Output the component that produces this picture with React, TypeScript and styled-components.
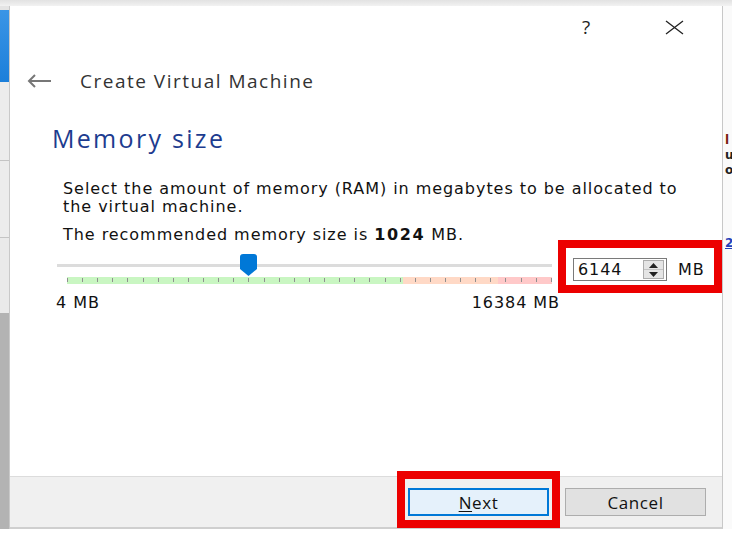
import React from "react";
import styled, { createGlobalStyle } from "styled-components";

const GlobalStyle = createGlobalStyle`
  html, body {
    margin: 0;
    padding: 0;
    background: #ffffff;
  }
  body {
    font-family: "DejaVu Sans", Verdana, sans-serif;
  }
`;

const Page = styled.div`
  width: 732px;
  height: 534px;
  overflow: hidden;
  display: flex;
  flex-direction: column;
  background: #ffffff;
`;

const TopShade = styled.div`
  height: 6px;
  flex-shrink: 0;
  background: linear-gradient(#e2e2e2, #f2f2f2);
`;

const Desk = styled.div`
  display: flex;
  height: 523px;
`;

const LeftStrip = styled.div`
  width: 9px;
  flex-shrink: 0;
  display: flex;
  flex-direction: column;
  border-right: 1px solid #c9c9c9;
`;

const StripPart = styled.div<{ $h: number; $bg: string; $line?: boolean }>`
  height: ${(p) => p.$h}px;
  flex-shrink: 0;
  background: ${(p) => p.$bg};
  border-bottom: ${(p) => (p.$line ? "1px solid #c4c4c4" : "none")};
`;

const StripRest = styled.div`
  flex: 1;
  background: #b3b3b3;
`;

const Dialog = styled.div`
  width: 713px;
  flex-shrink: 0;
  display: flex;
  flex-direction: column;
  background: #ffffff;
  border-right: 1px solid #c8c8c8;
  border-bottom: 2px solid #cfcfcf;
  box-sizing: border-box;
`;

const RightStrip = styled.div`
  flex: 1;
  overflow: hidden;
  background: #fafafa;
  padding: 127px 0 0 2px;
  font-family: "DejaVu Sans", sans-serif;
  font-size: 12px;
  font-weight: bold;
  line-height: 15px;
`;

const Fragment = styled.div<{ $color: string; $mt?: number }>`
  color: ${(p) => p.$color};
  margin-top: ${(p) => p.$mt ?? 0}px;
`;

const TitleBar = styled.div`
  height: 42px;
  display: flex;
  justify-content: flex-end;
  padding-right: 3px;
  flex-shrink: 0;
`;

const CaptionButton = styled.div<{ $shift?: number }>`
  width: 90px;
  display: flex;
  align-items: center;
  justify-content: center;
  font-family: "Open Sans", sans-serif;
  font-size: 19px;
  color: #1f1f1f;
  padding-left: ${(p) => p.$shift ?? 0}px;
  box-sizing: border-box;
`;

const Header = styled.div`
  height: 66px;
  display: flex;
  align-items: center;
  padding-left: 17px;
  gap: 28px;
  flex-shrink: 0;
`;

const HeaderTitle = styled.div`
  font-family: "Open Sans", sans-serif;
  font-size: 19px;
  color: #333333;
  letter-spacing: 1.5px;
`;

const Body = styled.div`
  flex: 1;
  padding-left: 42px;
  display: flex;
  flex-direction: column;
`;

const Heading = styled.div`
  font-family: "Open Sans", sans-serif;
  font-size: 25px;
  line-height: 30px;
  letter-spacing: 2.3px;
  color: #1d3c8f;
  margin-top: 9px;
`;

const Text = styled.p<{ $mt: number }>`
  margin: ${(p) => p.$mt}px 0 0 11px;
  font-size: 16px;
  letter-spacing: 0.95px;
  line-height: 18px;
  color: #111111;
  width: 650px;

  b {
    letter-spacing: 1.6px;
  }
`;

const SliderRow = styled.div`
  display: flex;
  align-items: flex-start;
`;

const SliderColumn = styled.div`
  width: 495px;
  padding-top: 10px;
  margin-left: 5px;
  flex-shrink: 0;
`;

const TrackArea = styled.div`
  position: relative;
  height: 22px;
  padding-top: 10px;
  box-sizing: border-box;
`;

const TrackLine = styled.div`
  height: 3px;
  background: #dcdcdc;
`;

const Handle = styled.svg`
  position: absolute;
  top: 0;
  width: 17px;
  height: 22px;
`;

const TickBar = styled.div`
  margin: 1px 0 0 10px;
  height: 7px;
  display: flex;
  position: relative;
`;

const Zone = styled.div<{ $w: number; $bg: string }>`
  width: ${(p) => p.$w}px;
  background: ${(p) => p.$bg};
`;

const Ticks = styled.div`
  position: absolute;
  left: 0;
  right: 0;
  top: 1px;
  height: 4px;
  background: repeating-linear-gradient(
    to right,
    #8f8f8f 0,
    #8f8f8f 1px,
    transparent 1px,
    transparent 15.12px
  );
`;

const Labels = styled.div`
  display: flex;
  justify-content: space-between;
  margin: 10px -8px 0 -1px;
  font-size: 16px;
  letter-spacing: 0.95px;
  line-height: 18px;
  color: #111111;
`;

const Highlight = styled.div<{ $pad: string; $mt?: number; $ml?: number }>`
  border: 8px solid #ec0000;
  padding: ${(p) => p.$pad};
  margin-top: ${(p) => p.$mt ?? 0}px;
  margin-left: ${(p) => p.$ml ?? 0}px;
  display: flex;
  align-items: center;
  flex-shrink: 0;
`;

const SpinBox = styled.div`
  width: 94px;
  height: 23px;
  box-sizing: border-box;
  border: 1px solid #7a7a7a;
  display: flex;
  align-items: center;
  justify-content: space-between;
  padding: 0 2px 0 4px;
  background: #ffffff;
`;

const SpinValue = styled.span`
  font-size: 16px;
  letter-spacing: 0.9px;
  color: #111111;
`;

const SpinButtons = styled.div`
  width: 21px;
  height: 19px;
  display: flex;
  flex-direction: column;
  border: 1px solid #adadad;
  box-sizing: border-box;
  background: #e5e5e5;
`;

const SpinHalf = styled.div<{ $top?: boolean }>`
  flex: 1;
  display: flex;
  align-items: center;
  justify-content: center;
  border-bottom: ${(p) => (p.$top ? "1px solid #c4c4c4" : "none")};
`;

const Unit = styled.span`
  margin-left: 11px;
  font-size: 16px;
  letter-spacing: 0.9px;
  color: #111111;
`;

const Footer = styled.div`
  height: 50px;
  flex-shrink: 0;
  border-top: 1px solid #dcdcdc;
  background: #f0f0f0;
  display: flex;
  justify-content: flex-end;
  align-items: flex-start;
  gap: 5px;
  padding-right: 16px;
`;

const Button = styled.button<{ $primary?: boolean }>`
  width: 141px;
  height: 28px;
  margin-top: ${(p) => (p.$primary ? 0 : 11)}px;
  font-family: "Open Sans", sans-serif;
  font-size: 17px;
  letter-spacing: 0.6px;
  color: #111111;
  background: ${(p) => (p.$primary ? "#e5f1fb" : "#e1e1e1")};
  border: ${(p) => (p.$primary ? "2px solid #0078d7" : "1px solid #adadad")};
  padding: 0;
  u {
    text-underline-offset: 2px;
  }
`;

export default function App() {
  const handleLeft = 183;
  return (
    <Page>
      <GlobalStyle />
      <TopShade />
      <Desk>
        <LeftStrip>
          <StripPart $h={4} $bg="#e4e4e4" />
          <StripPart $h={72} $bg="linear-gradient(#3b95e6, #1c7fda)" />
          <StripPart $h={78} $bg="#ececec" $line />
          <StripPart $h={76} $bg="#ececec" $line />
          <StripPart $h={75} $bg="#eaeaea" />
          <StripRest />
        </LeftStrip>
        <Dialog>
          <TitleBar>
            <CaptionButton $shift={4}>?</CaptionButton>
            <CaptionButton>
              <svg width="19" height="15" viewBox="0 0 19 15">
                <path d="M1 1 L18 14 M18 1 L1 14" stroke="#222" strokeWidth="1.3" fill="none" />
              </svg>
            </CaptionButton>
          </TitleBar>
          <Header>
            <svg width="25" height="14" viewBox="0 0 25 14">
              <path d="M24 7 H2 M8 1 L2 7 L8 13" stroke="#777" strokeWidth="2" fill="none" />
            </svg>
            <HeaderTitle>Create Virtual Machine</HeaderTitle>
          </Header>
          <Body>
            <Heading>Memory size</Heading>
            <Text $mt={27}>
              Select the amount of memory (RAM) in megabytes to be allocated to
              <br />
              the virtual machine.
            </Text>
            <Text $mt={10}>
              The recommended memory size is <b>1024</b> MB.
            </Text>
            <SliderRow>
              <SliderColumn>
                <TrackArea>
                  <TrackLine />
                  <Handle viewBox="0 0 17 22" style={{ left: handleLeft }}>
                    <path d="M0 3 Q0 0 3 0 H14 Q17 0 17 3 V15 L8.5 22 L0 15 Z" fill="#0078d7" />
                  </Handle>
                </TrackArea>
                <TickBar>
                  <Zone $w={336} $bg="#c9f6c2" />
                  <Zone $w={95} $bg="#ffd9c6" />
                  <Zone $w={54} $bg="#ffc9c9" />
                  <Ticks />
                </TickBar>
                <Labels>
                  <span>4 MB</span>
                  <span>16384 MB</span>
                </Labels>
              </SliderColumn>
              <Highlight $pad="10px 9px 4px 7px" $ml={6} $mt={-4}>
                <SpinBox>
                  <SpinValue>6144</SpinValue>
                  <SpinButtons>
                    <SpinHalf $top>
                      <svg width="9" height="5" viewBox="0 0 9 5">
                        <path d="M0 5 L4.5 0 L9 5 Z" fill="#222" />
                      </svg>
                    </SpinHalf>
                    <SpinHalf>
                      <svg width="9" height="5" viewBox="0 0 9 5">
                        <path d="M0 0 L4.5 5 L9 0 Z" fill="#222" />
                      </svg>
                    </SpinHalf>
                  </SpinButtons>
                </SpinBox>
                <Unit>MB</Unit>
              </Highlight>
            </SliderRow>
          </Body>
          <Footer>
            <Highlight $pad="9px 3px 4px 3px" $mt={-6}>
              <Button $primary>
                <u>N</u>ext
              </Button>
            </Highlight>
            <Button>Cancel</Button>
          </Footer>
        </Dialog>
        <RightStrip>
          <Fragment $color="#7a1b10">l</Fragment>
          <Fragment $color="#222">u</Fragment>
          <Fragment $color="#222">o</Fragment>
          <Fragment $color="#2340b8" $mt={58}>
            <u>2</u>
          </Fragment>
        </RightStrip>
      </Desk>
    </Page>
  );
}
